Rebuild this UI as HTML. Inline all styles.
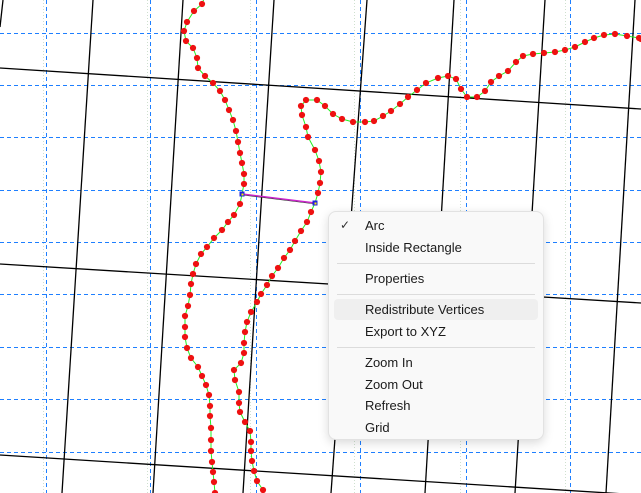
<!DOCTYPE html>
<html><head><meta charset="utf-8"><style>
html,body{margin:0;padding:0;background:#fff;width:641px;height:493px;overflow:hidden;position:relative;font-family:"Liberation Sans",sans-serif}
svg{position:absolute;left:0;top:0}
.menu{position:absolute;left:328px;top:211px;width:216px;height:229px;background:#f9f9f9;border:1px solid #e2e2e2;border-radius:8px;box-shadow:0 3px 10px rgba(0,0,0,.15);box-sizing:border-box}
.it{position:absolute;left:36px;font-size:13px;color:#1a1a1a;line-height:16px}
.sep{position:absolute;left:8px;right:8px;height:1px;background:#dcdcdc}
.hl{position:absolute;left:5px;right:5px;top:87px;height:21px;background:#efefef;border-radius:4px}
.chk{position:absolute;left:11px;top:6px;font-size:12px;color:#333}
</style></head><body>
<svg width="641" height="493" id="s"></svg>
<div class="menu">
<div class="hl"></div>
<div class="chk">✓</div>
<div class="it" style="top:6px">Arc</div>
<div class="it" style="top:28px">Inside Rectangle</div>
<div class="sep" style="top:51px"></div>
<div class="it" style="top:59px">Properties</div>
<div class="sep" style="top:82px"></div>
<div class="it" style="top:90px">Redistribute Vertices</div>
<div class="it" style="top:112px">Export to XYZ</div>
<div class="sep" style="top:135px"></div>
<div class="it" style="top:143px">Zoom In</div>
<div class="it" style="top:165px">Zoom Out</div>
<div class="it" style="top:186px">Refresh</div>
<div class="it" style="top:208px">Grid</div>
</div>
<script>
var s='';
[43,147,250,354,460,565].forEach(function(x){s+='<line x1="'+x+'.5" y1="0" x2="'+x+'.5" y2="493" stroke="#cfe0cf" stroke-dasharray="1,2"/>';});
[46,150,256,360,466,570].forEach(function(x){s+='<line x1="'+x+'.5" y1="0" x2="'+x+'.5" y2="493" stroke="#1e7fff" stroke-dasharray="4,3"/>';});
[33,85,137,190,242,294,347,399,452].forEach(function(y){s+='<line x1="0" y1="'+y+'.5" x2="641" y2="'+y+'.5" stroke="#1e7fff" stroke-dasharray="4,3"/>';});
var bl=[[3,0,0,27],[93,0,62,493],[183,0,153,493],[274,0,243,493],[367,0,331,493],[454,0,425,493],[545,0,515,493],[635,0,606,493],[0,68,641,109],[0,264,641,303],[0,455,641,495]];
bl.forEach(function(l){s+='<line x1="'+l[0]+'" y1="'+l[1]+'" x2="'+l[2]+'" y2="'+l[3]+'" stroke="#000" stroke-width="1.3"/>';});
var A=[[205,-4],[202,4],[194,11],[187,22],[184,31],[186,41],[193,48],[197,58],[198,68],[205,76],[213,83],[220,91],[225,100],[229,110],[233,120],[236,131],[238,142],[240,153],[242,163],[244,174],[244,184],[242,194],[240,204],[234,215],[228,222],[222,230],[214,238],[207,247],[201,254],[196,264],[193,274],[191,284],[190,295],[188,306],[185,316],[185,327],[185,337],[187,348],[191,358],[198,367],[202,376],[206,385],[209,395],[210,406],[210,416],[211,428],[211,440],[211,451],[212,462],[213,472],[214,482],[215,493]];
var B=[[641,39],[639,38],[627,36],[615,34],[604,35],[594,38],[585,42],[575,47],[565,50],[555,52],[544,53],[533,54],[523,56],[516,62],[508,71],[499,76],[491,82],[485,91],[477,97],[467,97],[461,89],[456,79],[448,76],[438,78],[426,83],[417,90],[408,97],[400,104],[391,111],[383,116],[374,121],[365,122],[353,122],[342,119],[333,114],[325,106],[317,100],[306,100],[301,106],[302,115],[306,127],[308,137],[315,150],[319,161],[321,172],[320,183],[318,193],[315,203],[311,212],[307,222],[301,231],[295,241],[290,250],[284,258],[278,268],[272,276],[267,285],[261,294],[257,302],[251,312],[247,322],[245,332],[244,343],[244,353],[241,363],[234,370],[235,380],[239,392],[239,403],[240,412],[245,422],[250,431],[251,442],[251,451],[252,461],[254,471],[257,481],[263,490]];
[A,B].forEach(function(c){
 s+='<polyline fill="none" stroke="#22ee22" stroke-width="1" points="'+c.map(function(p){return p.join(',')}).join(' ')+'"/>';
 c.forEach(function(p,i){ if((c===A&&i==21)||(c===B&&i==47))return; s+='<circle cx="'+p[0]+'" cy="'+p[1]+'" r="3.1" fill="#ee1111"/>';});
});
s+='<line x1="242" y1="194" x2="315" y2="203" stroke="#cc22cc" stroke-width="1.5"/>';
s+='<line x1="242" y1="195" x2="315" y2="204" stroke="#333" stroke-width="0.6"/>';
[[242,194],[315,203]].forEach(function(p){s+='<rect x="'+(p[0]-2.5)+'" y="'+(p[1]-2.5)+'" width="5" height="5" fill="#2222dd"/><rect x="'+(p[0]-0.5)+'" y="'+(p[1]-0.5)+'" width="2" height="2" fill="#ffee00"/>';});
document.getElementById('s').innerHTML=s;
</script>
</body></html>
